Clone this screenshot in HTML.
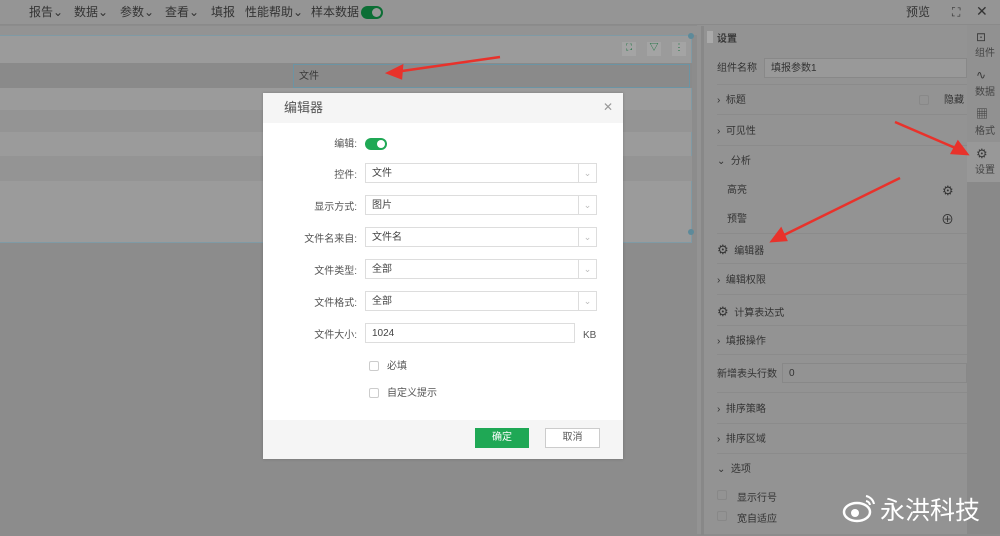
<!DOCTYPE html>
<html><head><meta charset="utf-8"><style>
*{margin:0;padding:0;box-sizing:border-box}
body{width:1000px;height:534px;overflow:hidden;background:#8c8c8c;font-family:"Liberation Sans","Noto Sans CJK SC",sans-serif;font-size:11px;line-height:1.2;color:#3a3a3a;position:relative}
.a{position:absolute}
.top{left:0;top:0;width:1000px;height:25px;background:#959595;border-bottom:1px solid #8a8a8a}
.top span{position:absolute;top:5px;font-size:12px;color:#333}
.row{left:0;width:692px}
.panel{left:707px;top:25px;width:260px;height:509px;background:#939393}
.pi{position:absolute;left:10px;width:250px;border-bottom:1px solid #8b8b8b;font-size:10px;color:#333}
.rb{left:967px;top:25px;width:33px;height:509px;background:#898989}
.dlg{left:263px;top:93px;width:360px;height:366px;background:#fff;box-shadow:0 0 3px rgba(0,0,0,.2)}
.dh{height:30px;background:#f5f5f5;padding:7px 0 0 21px;font-size:13px;color:#555}
.lab{position:absolute;right:266px;font-size:10px;color:#555;text-align:right;white-space:nowrap}
.inp{position:absolute;left:102px;width:232px;height:20px;border:1px solid #ddd;font-size:10px;padding:2px 6px 0;line-height:16px;color:#444}
.inp i{position:absolute;right:0;top:0;width:18px;height:18px;border-left:1px solid #ddd;font-style:normal;color:#bbb;text-align:center;font-size:9px;line-height:18px}
.cb{position:absolute;width:10px;height:10px;border:1px solid #ccc;border-radius:2px}
</style></head><body>
<div class="a top">
<span style="left:29px">报告⌄</span><span style="left:74px">数据⌄</span><span style="left:120px">参数⌄</span><span style="left:165px">查看⌄</span><span style="left:211px">填报</span><span style="left:245px">性能帮助⌄</span><span style="left:311px">样本数据</span>
<div class="a" style="left:361px;top:6px;width:22px;height:13px;border-radius:7px;background:#0c6e35"><div style="position:absolute;right:2px;top:2px;width:9px;height:9px;border-radius:50%;background:#999"></div></div>
<span style="left:906px">预览</span><span style="left:952px;font-size:12px">⛶</span><span style="left:976px;font-size:14px;top:3px">✕</span>
</div>
<div class="a" style="left:0;top:26px;width:697px;height:9px;background:#939393"></div>
<div class="a" style="left:0;top:35px;width:692px;height:208px;background:#9b9b9b;border:1px solid #7f9aa5;border-left:none"></div>
<div class="a row" style="top:63px;height:25px;background:#8a8a8a"></div>
<div class="a row" style="top:110px;height:22px;background:#949494"></div>
<div class="a row" style="top:156px;height:25px;background:#949494"></div>
<div class="a" style="left:293px;top:64px;width:397px;height:24px;border:1px solid #6b94a4;font-size:10px;padding:3px 5px 0;line-height:18px">文件</div>
<div class="a" style="left:622px;top:42px;width:14px;height:14px;background:#a4a4a4;color:#0c6e35;font-size:9px;text-align:center">⛶</div>
<div class="a" style="left:647px;top:42px;width:14px;height:14px;background:#a4a4a4;color:#0c6e35;font-size:9px;text-align:center">▽</div>
<div class="a" style="left:672px;top:42px;width:14px;height:14px;background:#a4a4a4;color:#0c6e35;font-size:9px;text-align:center">⋮</div>
<div class="a" style="left:688px;top:33px;width:6px;height:6px;border-radius:50%;background:#5d8a9a"></div>
<div class="a" style="left:688px;top:229px;width:6px;height:6px;border-radius:50%;background:#5d8a9a"></div>
<div class="a" style="left:697px;top:25px;width:10px;height:509px;background:#939393"></div>
<div class="a" style="left:701px;top:26px;width:3px;height:509px;background:#888"></div>

<div class="a panel">
<div class="a" style="left:10px;top:9px;font-size:10px;font-weight:bold">设置</div>
<div class="a" style="left:0;top:6px;width:6px;height:12px;background:#aaa"></div>
<div class="pi" style="top:28px;height:32px;line-height:32px">组件名称<span style="position:absolute;left:47px;top:5px;width:203px;height:20px;border:1px solid #888;background:#999;padding:2px 6px 0;line-height:16px">填报参数1</span></div>
<div class="pi" style="top:60px;height:30px;line-height:32px">›&nbsp; 标题<span class="cb" style="left:202px;top:10px;border-color:#888"></span><span style="position:absolute;left:227px">隐藏</span></div>
<div class="pi" style="top:90px;height:31px;line-height:33px">›&nbsp; 可见性</div>
<div class="pi" style="top:121px;height:88px;line-height:32px">⌄&nbsp; 分析<div style="position:absolute;left:10px;top:29px">高亮</div><div style="position:absolute;left:10px;top:58px">预警</div><div style="position:absolute;left:225px;top:29px;font-size:13px">⚙</div><div style="position:absolute;left:224px;top:58px;font-size:13px">⊕</div></div>
<div class="pi" style="top:209px;height:30px;line-height:32px"><span style="font-size:13px">⚙</span>&nbsp; 编辑器</div>
<div class="pi" style="top:239px;height:31px;line-height:33px">›&nbsp; 编辑权限</div>
<div class="pi" style="top:270px;height:31px;line-height:33px"><span style="font-size:13px">⚙</span>&nbsp; 计算表达式</div>
<div class="pi" style="top:301px;height:29px;line-height:31px">›&nbsp; 填报操作</div>
<div class="pi" style="top:330px;height:38px;line-height:40px">新增表头行数<span style="position:absolute;left:65px;top:8px;width:185px;height:20px;border:1px solid #888;padding:2px 6px 0;line-height:16px">0</span></div>
<div class="pi" style="top:368px;height:31px;line-height:33px">›&nbsp; 排序策略</div>
<div class="pi" style="top:399px;height:30px;line-height:32px">›&nbsp; 排序区域</div>
<div class="pi" style="top:429px;height:80px;line-height:32px;border:none">⌄&nbsp; 选项
<span class="cb" style="left:0;top:36px;border-color:#888"></span><span style="position:absolute;left:20px;top:29px">显示行号</span>
<span class="cb" style="left:0;top:57px;border-color:#888"></span><span style="position:absolute;left:20px;top:50px">宽自适应</span></div>
</div>
<div class="a" style="left:968px;top:60px;width:4px;height:70px;background:#888;border-radius:2px"></div>
<div class="a rb">
<div class="a" style="left:0;top:0;width:33px;height:155px;background:#919191"></div>
<div class="a" style="left:9px;top:5px;font-size:12px">⊡</div><div class="a" style="left:8px;top:23px;font-size:10px;color:#444">组件</div>
<div class="a" style="left:9px;top:43px;font-size:12px">∿</div><div class="a" style="left:8px;top:62px;font-size:10px;color:#444">数据</div>
<div class="a" style="left:9px;top:82px;font-size:12px">▦</div><div class="a" style="left:8px;top:101px;font-size:10px;color:#444">格式</div>
<div class="a" style="left:0;top:117px;width:33px;height:40px;background:#989898"></div>
<div class="a" style="left:9px;top:121px;font-size:13px">⚙</div><div class="a" style="left:8px;top:140px;font-size:10px;color:#444">设置</div>
</div>

<svg class="a" style="left:0;top:0" width="1000" height="534">
<g stroke="#e8322b" stroke-width="2.5" fill="#e8322b">
<line x1="500" y1="57" x2="395" y2="72"/><polygon points="388,73 402,66 401,78"/>
<line x1="895" y1="122" x2="960" y2="150"/><polygon points="967,154 952,153 958,142"/>
<line x1="900" y1="178" x2="780" y2="237"/><polygon points="772,241 781,229 786,240"/>
</g>
<text x="880" y="519" fill="#fff" font-size="25" font-family="Noto Sans CJK SC, sans-serif">永洪科技</text>
<ellipse cx="857" cy="512" rx="13" ry="9" fill="none" stroke="#fff" stroke-width="2.5"/><circle cx="855" cy="513" r="4" fill="#fff"/>
<path d="M866 496a10 10 0 0 1 8 8M866 501a5 5 0 0 1 4 4" stroke="#fff" stroke-width="2" fill="none"/>
</svg>

<div class="a dlg">
<div class="dh">编辑器<span style="position:absolute;right:10px;top:7px;color:#999;font-size:12px">✕</span></div>
<div class="lab" style="top:46px">编辑:</div><div class="a" style="left:102px;top:45px;width:22px;height:12px;border-radius:7px;background:#1fa855"><div style="position:absolute;right:2px;top:2px;width:8px;height:8px;border-radius:50%;background:#fff"></div></div>
<div class="lab" style="top:77px">控件:</div><div class="inp" style="top:70px">文件<i>⌄</i></div>
<div class="lab" style="top:109px">显示方式:</div><div class="inp" style="top:102px">图片<i>⌄</i></div>
<div class="lab" style="top:141px">文件名来自:</div><div class="inp" style="top:134px">文件名<i>⌄</i></div>
<div class="lab" style="top:173px">文件类型:</div><div class="inp" style="top:166px">全部<i>⌄</i></div>
<div class="lab" style="top:205px">文件格式:</div><div class="inp" style="top:198px">全部<i>⌄</i></div>
<div class="lab" style="top:237px">文件大小:</div><div class="inp" style="top:230px;width:210px">1024</div><div class="a" style="left:320px;top:237px;font-size:10px;color:#555">KB</div>
<div class="cb" style="left:106px;top:268px"></div><div class="a" style="left:124px;top:268px;font-size:10px;color:#555">必填</div>
<div class="cb" style="left:106px;top:295px"></div><div class="a" style="left:124px;top:295px;font-size:10px;color:#555">自定义提示</div>
<div class="a" style="left:0;top:327px;width:360px;height:39px;background:#f5f5f5"></div>
<div class="a" style="left:212px;top:335px;width:54px;height:20px;background:#1fa855;color:#fff;font-size:10px;text-align:center;line-height:20px">确定</div>
<div class="a" style="left:282px;top:335px;width:55px;height:20px;border:1px solid #ccc;background:#fff;color:#555;font-size:10px;text-align:center;line-height:18px">取消</div>
</div>
</body></html>
